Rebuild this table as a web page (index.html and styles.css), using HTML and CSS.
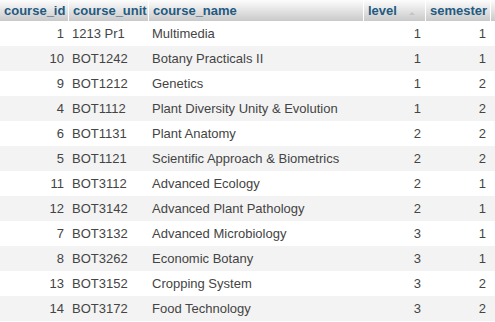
FILE: index.html
```html
<!DOCTYPE html>
<html>
<head>
<meta charset="utf-8">
<link rel="stylesheet" href="styles.css">
</head>
<body>
<table class="grid">
  <colgroup>
    <col class="c1"><col class="c2"><col class="c3"><col class="c4"><col class="c5"><col class="c6">
  </colgroup>
  <thead>
    <tr>
      <th>course_id</th>
      <th>course_unit</th>
      <th>course_name</th>
      <th class="sorted">level <span class="sort-icon"></span></th>
      <th>semester</th>
      <th></th>
    </tr>
  </thead>
  <tbody>
    <tr><td class="num">1</td><td>1213 Pr1</td><td>Multimedia</td><td class="num">1</td><td class="num">1</td><td></td></tr>
    <tr><td class="num">10</td><td>BOT1242</td><td>Botany Practicals II</td><td class="num">1</td><td class="num">1</td><td></td></tr>
    <tr><td class="num">9</td><td>BOT1212</td><td>Genetics</td><td class="num">1</td><td class="num">2</td><td></td></tr>
    <tr><td class="num">4</td><td>BOT1112</td><td>Plant Diversity Unity &amp; Evolution</td><td class="num">1</td><td class="num">2</td><td></td></tr>
    <tr><td class="num">6</td><td>BOT1131</td><td>Plant Anatomy</td><td class="num">2</td><td class="num">2</td><td></td></tr>
    <tr><td class="num">5</td><td>BOT1121</td><td>Scientific Approach &amp; Biometrics</td><td class="num">2</td><td class="num">2</td><td></td></tr>
    <tr><td class="num">11</td><td>BOT3112</td><td>Advanced Ecology</td><td class="num">2</td><td class="num">1</td><td></td></tr>
    <tr><td class="num">12</td><td>BOT3142</td><td>Advanced Plant Pathology</td><td class="num">2</td><td class="num">1</td><td></td></tr>
    <tr><td class="num">7</td><td>BOT3132</td><td>Advanced Microbiology</td><td class="num">3</td><td class="num">1</td><td></td></tr>
    <tr><td class="num">8</td><td>BOT3262</td><td>Economic Botany</td><td class="num">3</td><td class="num">1</td><td></td></tr>
    <tr><td class="num">13</td><td>BOT3152</td><td>Cropping System</td><td class="num">3</td><td class="num">2</td><td></td></tr>
    <tr><td class="num">14</td><td>BOT3172</td><td>Food Technology</td><td class="num">3</td><td class="num">2</td><td></td></tr>
  </tbody>
</table>
</body>
</html>
```

FILE: styles.css
```css
html, body {
  margin: 0;
  padding: 0;
  background: #ffffff;
}
.grid {
  border-collapse: separate;
  border-spacing: 0;
  table-layout: fixed;
  width: 495px;
  font-family: "Liberation Sans", Arial, sans-serif;
  font-size: 13px;
  color: #444444;
}
.c1 { width: 69px; }
.c2 { width: 80px; }
.c3 { width: 215px; }
.c4 { width: 62px; }
.c5 { width: 65px; }
.c6 { width: 4px; }
.grid th {
  height: 21px;
  padding: 0 3px 0 4px;
  text-align: left;
  font-weight: bold;
  color: #235a81;
  background: linear-gradient(#fdfdfd, #c9c9c9);
  border-right: 1px solid #ffffff;
  white-space: nowrap;
  overflow: hidden;
  line-height: 21px;
  box-sizing: border-box;
}
.grid th:last-child { border-right: none; padding: 0; }
.grid td {
  height: 25px;
  padding: 0 4px 0 3px;
  line-height: 25px;
  white-space: nowrap;
  overflow: hidden;
  border-right: 1px solid transparent;
  box-sizing: border-box;
}
.grid td:last-child { border-right: none; padding: 0; }
.grid td.num { text-align: right; }
.grid tbody tr:nth-child(even) td { background: #f3f3f3; }
.sort-icon {
  display: inline-block;
  width: 0;
  height: 0;
  margin-left: 8px;
  margin-top: 3px;
  border-left: 3px solid transparent;
  border-right: 3px solid transparent;
  border-bottom: 3px solid #c4c4c4;
  vertical-align: middle;
}
```
